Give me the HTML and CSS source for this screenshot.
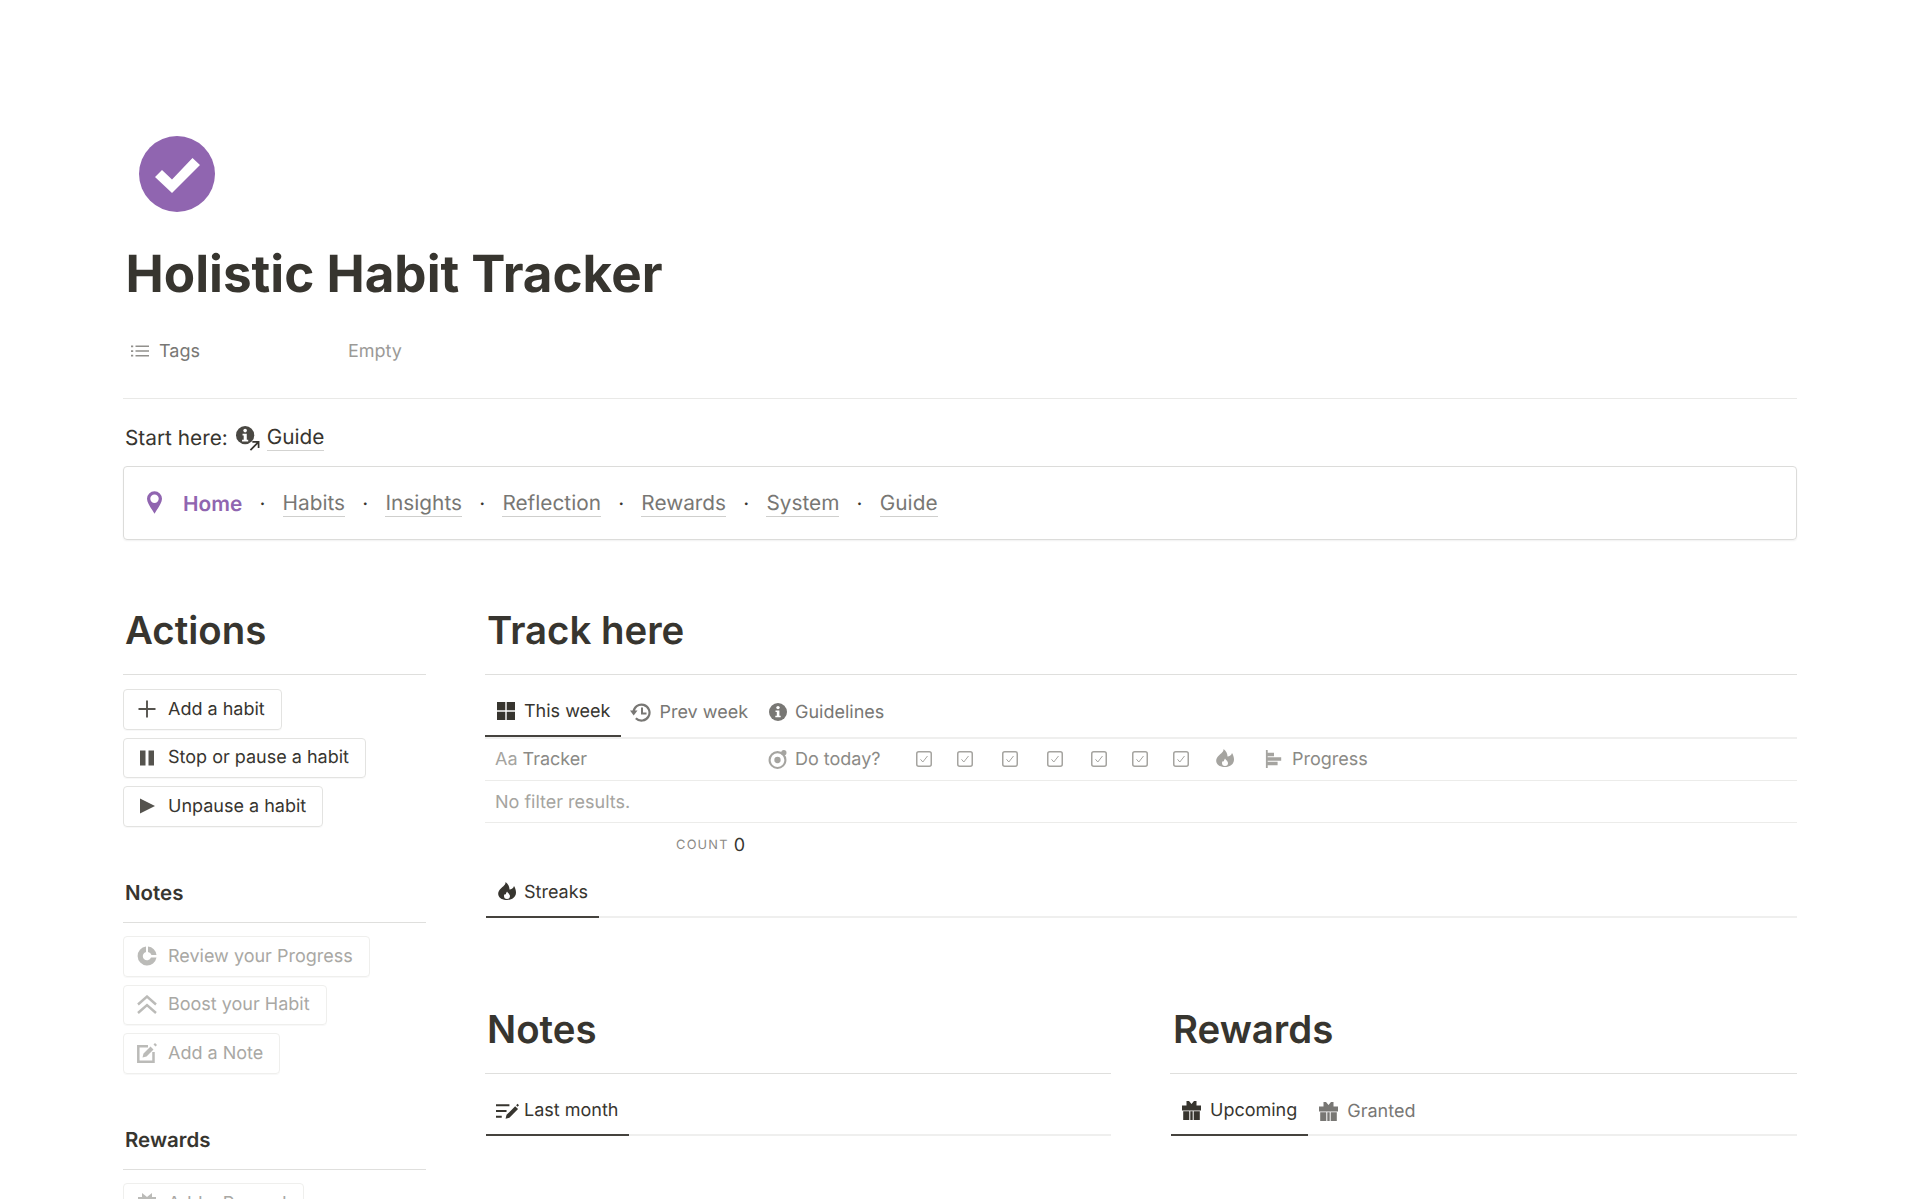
FILE: index.html
```html
<!DOCTYPE html>
<html lang="en">
<head>
<meta charset="utf-8">
<title>Holistic Habit Tracker</title>
<link rel="stylesheet" href="styles.css">
</head>
<body>
<main class="page">
  <header class="head">
    <svg class="logo" viewBox="0 0 76 76"><circle cx="38" cy="38" r="38" fill="#9065b0"/><path d="M16 41 L23 34 L33 43.500 L53.500 22 L61 29 L33 57Z" fill="#fff"/></svg>
    <h1 class="title">Holistic Habit Tracker</h1>
    <div class="prop">
      <span class="prop-name"><svg class="ic-tags" viewBox="0 0 18 14"><path d="M0 1.500h2.200v1.700H0zM0 6.200h2.200v1.700H0zM0 10.800h2.200v1.700H0zM4.500 1.600H18v1.500H4.500zM4.500 6.300H18v1.500H4.500zM4.500 10.900H18v1.500H4.500z" fill="#91908c"/></svg>Tags</span>
      <span class="prop-val">Empty</span>
    </div>
  </header>
  <hr class="rule">
  <p class="start">Start here:
    <svg class="ic-info-link" viewBox="0 0 26 26"><circle cx="9.500" cy="9.500" r="9.500" fill="#4a4843"/><circle cx="9.500" cy="4.800" r="1.900" fill="#fff"/><path d="M6.800 8h4.400v6.200h1.500v1.800H6.300v-1.800h1.700V9.800H6.800z" fill="#fff"/><path d="M15 25l8-8M17 16.500h6.500V23" fill="none" stroke="#37352f" stroke-width="1.800"/></svg>
    <a class="link">Guide</a></p>
  <nav class="callout">
    <svg class="ic-pin" viewBox="0 0 16 24"><path fill-rule="evenodd" d="M8 0a8 8 0 0 1 8 8c0 4.500-4.500 10-8 16C4.500 18 0 12.500 0 8a8 8 0 0 1 8-8zm0 3.500a4.500 4.500 0 1 0 0 9 4.500 4.500 0 0 0 0-9z" fill="#9065b0"/></svg>
    <b class="here">Home</b><i class="sep">·</i><a class="nav-link">Habits</a><i class="sep">·</i><a class="nav-link">Insights</a><i class="sep">·</i><a class="nav-link">Reflection</a><i class="sep">·</i><a class="nav-link">Rewards</a><i class="sep">·</i><a class="nav-link">System</a><i class="sep">·</i><a class="nav-link">Guide</a>
  </nav>

  <div class="cols">
    <aside class="side">
      <h2 class="h2">Actions</h2>
      <div class="btns">
        <a class="btn"><svg class="ic" viewBox="0 0 20 20"><path d="M10 1.500v17M1.500 10h17" stroke="#55534e" stroke-width="1.900" fill="none"/></svg>Add a habit</a>
        <a class="btn"><svg class="ic" viewBox="0 0 20 20"><path d="M3 2.500h5.500v15H3zM11.500 2.500H17v15h-5.500z" fill="#55534e"/></svg>Stop or pause a habit</a>
        <a class="btn"><svg class="ic" viewBox="0 0 20 20"><path d="M3 2.500L18 10 3 17.500z" fill="#55534e"/></svg>Unpause a habit</a>
      </div>
      <h3 class="h3">Notes</h3>
      <div class="btns dim">
        <a class="btn"><svg class="ic" viewBox="0 0 20 20"><path d="M9 .500V6A4.200 4.200 0 1 0 14 11.500H19.500A9.500 9.500 0 1 1 9 .500zM11 .500A9.500 9.500 0 0 1 19.500 9H14.500A4.500 4.500 0 0 0 11 6z" fill="#8f8e8a"/></svg>Review your Progress</a>
        <a class="btn"><svg class="ic" viewBox="0 0 20 20"><path d="M1 9.500L10 1.500 19 9.500M1 18L10 10 19 18" fill="none" stroke="#8f8e8a" stroke-width="2.400"/></svg>Boost your Habit</a>
        <a class="btn"><svg class="ic" viewBox="0 0 20 20"><path d="M11 3.200H1.300V18.700H16.500V9" fill="none" stroke="#8f8e8a" stroke-width="2.500"/><path d="M5.500 14.500L6.500 10.500 13.500 3.500 16.500 6.500 9.500 13.500zM16.500 1.500L18 0 20 2 18.500 3.500z" fill="#8f8e8a"/></svg>Add a Note</a>
      </div>
      <h3 class="h3">Rewards</h3>
      <div class="btns dim">
        <a class="btn"><svg class="ic" viewBox="0 0 20 20"><path d="M2 9h7v10H2zM11 9h7v10h-7zM1 4h18v4H1zM5 0l5 4 5-4v4H5z" fill="#8f8e8a"/></svg>Add a Reward</a>
      </div>
    </aside>

    <section class="main">
      <h2 class="h2">Track here</h2>
      <div class="tabs tabs-top">
        <a class="tab on"><svg class="ic" viewBox="0 0 18 18"><path d="M0 0h8.300v8.300H0zM9.700 0H18v8.300H9.700zM0 9.700h8.300V18H0zM9.700 9.700H18V18H9.700z" fill="#37352f"/></svg>This week</a>
        <a class="tab tab-prev"><svg class="ic-w" viewBox="0 0 21 19"><path d="M3.500 9.500A8 8 0 1 1 5.800 15.200" fill="none" stroke="#787774" stroke-width="2.200"/><path d="M0 7.500H7.500L3.700 12.500z" fill="#787774"/><path d="M12 4.500V10.500H16.500" fill="none" stroke="#787774" stroke-width="2"/></svg>Prev week</a>
        <a class="tab"><svg class="ic" viewBox="0 0 18 18"><circle cx="9" cy="9" r="9" fill="#787774"/><circle cx="9" cy="4.600" r="1.700" fill="#fff"/><path d="M6.500 7.500h3.900v5.300h1.300v1.500H6.300v-1.500h1.500V9H6.500z" fill="#fff"/></svg>Guidelines</a>
      </div>
      <div class="thead">
        <span class="th th-name"><span class="aa">Aa</span>Tracker</span>
        <span class="th th-do"><svg class="ic-do" viewBox="0 0 18 18"><circle cx="9" cy="9.500" r="7.500" fill="none" stroke="#a5a4a0" stroke-width="2"/><circle cx="9" cy="9.500" r="3" fill="#a5a4a0"/><circle cx="15" cy="2.500" r="2.500" fill="#a5a4a0"/></svg>Do today?</span>
        <span class="th"><svg class="cb" viewBox="0 0 16 16"><rect x=".75" y=".75" width="14.500" height="14.500" rx="2" fill="none" stroke="#a5a4a0" stroke-width="1.500"/><path d="M4.500 8.300l2.300 2.700 4.700-6" fill="none" stroke="#a5a4a0"/></svg></span>
        <span class="th"><svg class="cb" viewBox="0 0 16 16"><rect x=".75" y=".75" width="14.500" height="14.500" rx="2" fill="none" stroke="#a5a4a0" stroke-width="1.500"/><path d="M4.500 8.300l2.300 2.700 4.700-6" fill="none" stroke="#a5a4a0"/></svg></span>
        <span class="th"><svg class="cb" viewBox="0 0 16 16"><rect x=".75" y=".75" width="14.500" height="14.500" rx="2" fill="none" stroke="#a5a4a0" stroke-width="1.500"/><path d="M4.500 8.300l2.300 2.700 4.700-6" fill="none" stroke="#a5a4a0"/></svg></span>
        <span class="th"><svg class="cb" viewBox="0 0 16 16"><rect x=".75" y=".75" width="14.500" height="14.500" rx="2" fill="none" stroke="#a5a4a0" stroke-width="1.500"/><path d="M4.500 8.300l2.300 2.700 4.700-6" fill="none" stroke="#a5a4a0"/></svg></span>
        <span class="th"><svg class="cb" viewBox="0 0 16 16"><rect x=".75" y=".75" width="14.500" height="14.500" rx="2" fill="none" stroke="#a5a4a0" stroke-width="1.500"/><path d="M4.500 8.300l2.300 2.700 4.700-6" fill="none" stroke="#a5a4a0"/></svg></span>
        <span class="th"><svg class="cb" viewBox="0 0 16 16"><rect x=".75" y=".75" width="14.500" height="14.500" rx="2" fill="none" stroke="#a5a4a0" stroke-width="1.500"/><path d="M4.500 8.300l2.300 2.700 4.700-6" fill="none" stroke="#a5a4a0"/></svg></span>
        <span class="th"><svg class="cb" viewBox="0 0 16 16"><rect x=".75" y=".75" width="14.500" height="14.500" rx="2" fill="none" stroke="#a5a4a0" stroke-width="1.500"/><path d="M4.500 8.300l2.300 2.700 4.700-6" fill="none" stroke="#a5a4a0"/></svg></span>
        <span class="th"><svg class="ic ic-fl" viewBox="0 0 18 18"><path fill-rule="evenodd" d="M7.500 0C8 3 4 5 1.500 8 0 10 0 12 .5 13.500 1.500 16.500 5 18 9 18 13.500 18 18 15.500 18 10.500 18 8 17 5.500 16 4 15.500 6 13.500 7.500 11.500 7.500 11.500 4.500 10 1.500 7.500 0ZM9 9.500C9.500 11 12 12 12 14A3 3 0 0 1 6 14C6 13 6.500 12.500 7 12 7.500 12.500 8 12.500 8 12 8 11 8.500 10.500 9 9.500Z" fill="#a5a4a0"/></svg></span>
        <span class="th"><svg class="ic" viewBox="0 0 18 20"><path d="M0 0h2v20H0zM2 3h7v4H2zM2 8h15v4H2zM2 13h11v4H2z" fill="#a5a4a0"/></svg>Progress</span>
      </div>
      <div class="empty">No filter results.</div>
      <div class="count"><span class="count-l">COUNT</span><span class="count-n">0</span></div>
      <div class="tabs tabs-s">
        <a class="tab on tab-st"><svg class="ic ic-fl" viewBox="0 0 18 18"><path fill-rule="evenodd" d="M7.500 0C8 3 4 5 1.500 8 0 10 0 12 .5 13.500 1.500 16.500 5 18 9 18 13.500 18 18 15.500 18 10.500 18 8 17 5.500 16 4 15.500 6 13.500 7.500 11.500 7.500 11.500 4.500 10 1.500 7.500 0ZM9 9.500C9.500 11 12 12 12 14A3 3 0 0 1 6 14C6 13 6.500 12.500 7 12 7.500 12.500 8 12.500 8 12 8 11 8.500 10.500 9 9.500Z" fill="#37352f"/></svg>Streaks</a>
      </div>
      <div class="two">
        <div>
          <h2 class="h2">Notes</h2>
          <div class="tabs tabs-s">
            <a class="tab on tab-note"><svg class="ic-n" viewBox="0 0 24 18"><path d="M0 2h14v2H0zM0 8h11v2H0zM0 14h6v2H0z" fill="#37352f"/><path d="M10 17l1-4 9-9 3 3-9 9zM21 3l1.500-1.500 1.500 1.500-1.500 1.500z" fill="#37352f"/></svg>Last month</a>
          </div>
        </div>
        <div class="col-r">
          <h2 class="h2">Rewards</h2>
          <div class="tabs tabs-s">
            <a class="tab on"><svg class="ic-g" viewBox="0 0 19 19"><path d="M4.500 0H7L9.500 3 12 0H14.500V4.500H4.500zM0 4.500H8.200V9.500H0zM10.800 4.500H19V9.500H10.800zM8.200 4.500H10.800V9.500H8.200zM1.200 10.200H7.300V19H1.200zM8.300 10.200H10.700V19H8.300zM11.700 10.200H17.800V19H11.700z" fill="#37352f"/></svg>Upcoming</a>
            <a class="tab"><svg class="ic-g" viewBox="0 0 19 19"><path d="M4.500 0H7L9.500 3 12 0H14.500V4.500H4.500zM0 4.500H8.200V9.500H0zM10.800 4.500H19V9.500H10.800zM8.200 4.500H10.800V9.500H8.200zM1.200 10.200H7.300V19H1.200zM8.300 10.200H10.700V19H8.300zM11.700 10.200H17.800V19H11.700z" fill="#787774"/></svg>Granted</a>
          </div>
        </div>
      </div>
    </section>
  </div>
</main>
</body>
</html>
```

FILE: styles.css
```css
* { box-sizing: border-box; }
html, body { margin: 0; height: 1199px; overflow: hidden; background: #fff; }
body { font-family: Inter, "Liberation Sans", sans-serif; color: #37352f; font-size: 20.8px; text-rendering: geometricPrecision; }
.page { padding: 0 123px; }
.head { padding-top: 136px; }
.logo { display: block; width: 76px; height: 76px; margin-left: 16px; }
.title { margin: 33px 0 0 2.500px; font-size: 51.2px; line-height: 58px; font-weight: 700; }
.prop { display: flex; margin-top: 34px; height: 28px; align-items: center; font-size: 18px; margin-left: 8px; }
.prop-name { display: flex; align-items: center; gap: 10px; width: 217px; color: #787774; }
.ic-tags { width: 18px; height: 14px; }
.prop-val { color: #9b9a97; }
.rule { border: 0; border-top: 1px solid #e9e9e7; margin: 33px 0 0; }
.start { margin: 0 0 0 2px; height: 67px; display: flex; align-items: center; gap: 7px; padding-top: 12px; }
.ic-info-link { width: 25px; height: 25px; flex: none; margin-left: 1px; }
.link { border-bottom: 1px solid #d3d3d1; line-height: 24px; margin-left: -1px; }
.callout { height: 74px; border: 1px solid #dcdcda; border-radius: 4px; display: flex; align-items: center; padding: 3px 0 0 23px; box-shadow: 0 1px 2px rgba(15,15,15,.06); color: #787774; }
.ic-pin { width: 15px; height: 23px; margin-right: 21px; margin-bottom: 4px; }
.here { color: #9065b0; font-weight: 600; }
.sep { font-style: normal; width: 40.4px; text-align: center; color: #37352f; }
.nav-link { border-bottom: 1px solid #cfcfcd; line-height: 24px; }
.cols { display: flex; gap: 59px; }
.side { width: 303px; flex: none; }
.main { flex: 1; min-width: 0; }
.h2 { margin: 0; height: 135px; padding: 69px 0 0 2px; font-size: 38.4px; line-height: 44px; font-weight: 600; border-bottom: 1px solid #dfdfdd; }
.col-r .h2 { padding-left: 3px; }
.btns { display: flex; flex-direction: column; align-items: flex-start; gap: 8px; margin-top: 14px; }
.btn { display: flex; align-items: center; height: 40.5px; padding: 0 16px 0 13px; gap: 11px; border: 1px solid #e3e3e1; border-radius: 4px; font-size: 18px; box-shadow: 0 1px 1px rgba(15,15,15,.03); }
.ic { width: 18px; height: 18px; flex: none; }
.btn .ic { width: 20px; height: 20px; }
.ic-fl { margin-bottom: 3px; }
.ic-w { width: 21px; height: 19px; flex: none; }
.ic-n { width: 23px; height: 18px; flex: none; }
.ic-g { width: 19px; height: 19px; flex: none; }
.ic-do { width: 19px; height: 19px; flex: none; }
.h3 { margin: 55px 0 0; height: 41px; padding: 0 0 18px 2px; font-size: 20.48px; line-height: 22px; font-weight: 600; border-bottom: 1px solid #dfdfdd; }
.h3 + .btns { margin-top: 13.5px; }
.dim .btn { color: #a9a8a4; border-color: #efefed; }
.dim .btn .ic { opacity: .6; }
.tabs { display: flex; height: 62px; border-bottom: 2px solid #efefee; }
.tabs-top { height: 64px; }
.tab { display: flex; align-items: center; gap: 8px; height: 62px; padding: 12px 11px 0 10px; font-size: 18px; color: #787774; }
.tab:first-child { padding-left: 12px; gap: 9px; }
.tab-prev { padding-left: 9px; }
.thead { display: grid; grid-template-columns: 272px 148px 41px 45px 45px 44px 41px 41px 43px 49px 1fr; height: 42px; padding-bottom: 1px; align-items: center; border-bottom: 1px solid #ececea; font-size: 18px; color: #8b8a86; }
.tab.on { color: #37352f; border-bottom: 2px solid #45433e; }
.th { display: flex; align-items: center; gap: 9px; padding-left: 11px; }
.th-name { padding-left: 10px; gap: 5px; }
.th-do { gap: 8px; }
.aa { color: #a5a4a0; }
.cb { width: 16px; height: 16px; display: block; }
.empty { height: 42px; display: flex; align-items: center; padding: 1px 0 0 10px; border-bottom: 1px solid #ececea; font-size: 18px; color: #a5a4a0; }
.count { height: 45px; display: flex; align-items: center; width: 272px; justify-content: flex-end; gap: 5px; padding-right: 12px; }
.count-l { font-size: 12.8px; letter-spacing: 1.2px; color: #8b8a86; }
.count-n { font-size: 18px; color: #37352f; }
.tabs-s { height: 50px; margin-left: 1px; }
.tabs-s .tab { height: 50px; padding: 1px 11px 0; gap: 9px; }
.tabs-s .tab-st { padding-left: 12px; gap: 8px; }
.tabs-s .tab-note { padding-left: 10px; gap: 5px; }
.two { display: grid; grid-template-columns: 626px 627px; gap: 59px; margin-top: 21px; }
.two .tabs { margin-top: 12px; }
.two .tabs .tab { padding-top: 1px; }
```
